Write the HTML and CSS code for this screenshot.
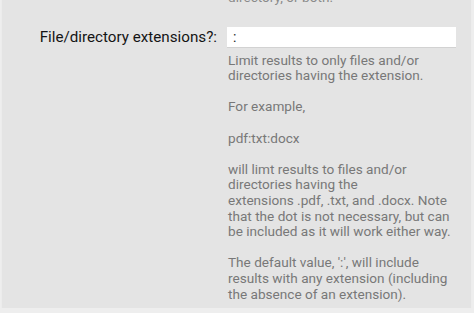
FILE: index.html
```html
<!DOCTYPE html>
<html>
<head>
<meta charset="utf-8">
<link rel="stylesheet" href="styles.css">
</head>
<body>
<div class="panel">
  <div class="row">
    <div class="label-col"></div>
    <div class="field-col"><p class="help prev">directory, or both.</p></div>
  </div>
  <div class="row main">
    <label class="label-col label" for="ext">File/directory extensions?:</label>
    <div class="field-col">
      <input id="ext" class="text-input" type="text" value=":">
      <div class="help">
        <p>Limit results to only files and/or<br>directories having the extension.</p>
        <p>For example,</p>
        <p>pdf:txt:docx</p>
        <p>will limt results to files and/or<br>directories having the<br>extensions .pdf, .txt, and .docx. Note<br>that the dot is not necessary, but can<br>be included as it will work either way.</p>
        <p>The default value, ':', will include<br>results with any extension (including<br>the absence of an extension).</p>
      </div>
    </div>
  </div>
</div>
</body>
</html>
```
FILE: styles.css
```css
html, body {
  margin: 0;
  padding: 0;
  background: #eeeeee;
  width: 474px;
  height: 313px;
  overflow: hidden;
}
body {
  font-family: Roboto, "Liberation Sans", sans-serif;
}
.panel {
  width: 469px;
  height: 308px;
  margin-left: 1px;
  background: #e4e4e4;
  border-left: 1px solid #ececec;
  border-right: 1px solid #ededed;
  overflow: hidden;
}
.row {
  display: grid;
  grid-template-columns: 215px 229px;
  column-gap: 10px;
}
.main {
  margin-top: 21px;
}
.label {
  text-align: right;
  font-size: 15.2px;
  color: #141414;
  padding-top: 1px;
}
.text-input {
  display: block;
  box-sizing: border-box;
  width: 229px;
  height: 21px;
  margin: 0;
  border: none;
  border-bottom: 1px solid #d2d2d2;
  background: #ffffff;
  font-family: inherit;
  font-size: 14px;
  color: #222;
  padding: 0 0 0 6px;
  outline: none;
}
.help {
  font-size: 13.6px;
  line-height: 15.6px;
  color: #787878;
  padding-left: 1px;
  margin-top: 5px;
  white-space: nowrap;
}
.help p {
  margin: 0 0 15.6px 0;
}
.help.prev {
  margin: -10px 0 0 0;
  color: #8a8a8a;
}
```
